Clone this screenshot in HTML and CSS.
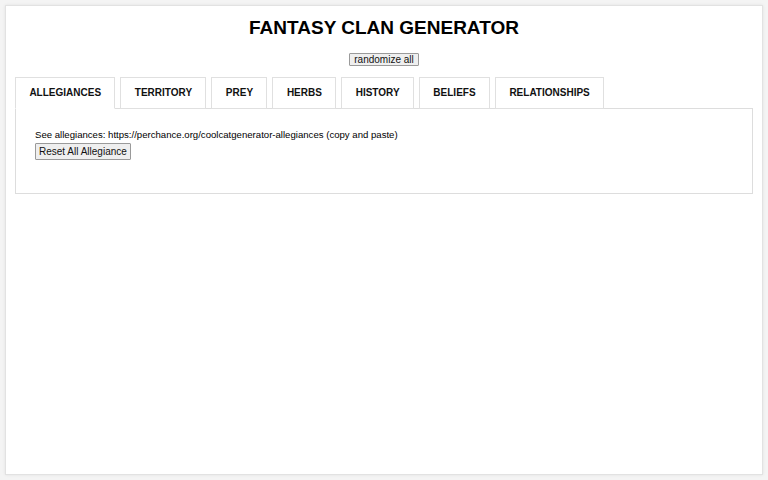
FILE: index.html
```html
<!DOCTYPE html>
<html lang="en">
<head>
    <meta charset="UTF-8">
    <meta name="viewport" content="width=device-width, initial-scale=1.0">
    <title>Fantasy Clan Generator</title>
    <link rel="stylesheet" href="styles.css">
</head>
<body>

    <div class="page">
        <!-- Title -->
        <h1 class="main-title">FANTASY CLAN GENERATOR</h1>

        <div class="top-actions">
            <button class="small-button">randomize all</button>
        </div>

        <!-- Tabs -->
        <div class="tabs">
            <div class="tab active">ALLEGIANCES</div>
            <div class="tab">TERRITORY</div>
            <div class="tab">PREY</div>
            <div class="tab">HERBS</div>
            <div class="tab">HISTORY</div>
            <div class="tab">BELIEFS</div>
            <div class="tab">RELATIONSHIPS</div>
        </div>

        <!-- Tab content -->
        <div class="tab-panel">
            <div class="panel-text">See allegiances: https://perchance.org/coolcatgenerator-allegiances (copy and paste)</div>
            <button class="small-button reset-button">Reset All Allegiance</button>
        </div>
    </div>

</body>
</html>
```

FILE: styles.css
```css
/* Global styling */
* {
    box-sizing: border-box;
}

body {
    margin: 0;
    padding: 5px;
    height: 480px;
    background: #f4f4f4;
    font-family: "Liberation Sans", Arial, sans-serif;
    color: #000;
}

/* White page card */
.page {
    height: 470px;
    background: #fff;
    border: 1px solid #e2e2e2;
    box-shadow: 0 0 3px rgba(0, 0, 0, 0.08);
    padding: 0 9px;
}

.main-title {
    margin: 0;
    padding-top: 10px;
    text-align: center;
    font-size: 19px;
    line-height: 24px;
    font-weight: bold;
}

.top-actions {
    display: flex;
    justify-content: center;
    margin-top: 13px;
}

.small-button {
    font-family: "Liberation Sans", Arial, sans-serif;
    font-size: 10px;
    line-height: 11px;
    height: 13px;
    padding: 0 4px;
    background: #efefef;
    border: 1px solid #9a9a9a;
    border-radius: 1px;
    color: #111;
}

/* Tabs row */
.tabs {
    display: flex;
    gap: 5px;
    margin-top: 11px;
}

.tab {
    height: 32px;
    padding: 0 13.4px;
    border: 1px solid #e0e0e0;
    font-size: 10px;
    font-weight: bold;
    line-height: 30px;
    color: #111;
    background: #fff;
}

.tab.active {
    border-bottom-color: #fff;
    position: relative;
    z-index: 1;
}

.tab-panel {
    height: 86px;
    margin-top: -1px;
    border: 1px solid #ddd;
    padding: 19px 19px;
}

.panel-text {
    font-size: 9.6px;
    line-height: 13px;
}

.reset-button {
    height: 17px;
    padding: 0 3px;
    font-size: 10px;
}
```
